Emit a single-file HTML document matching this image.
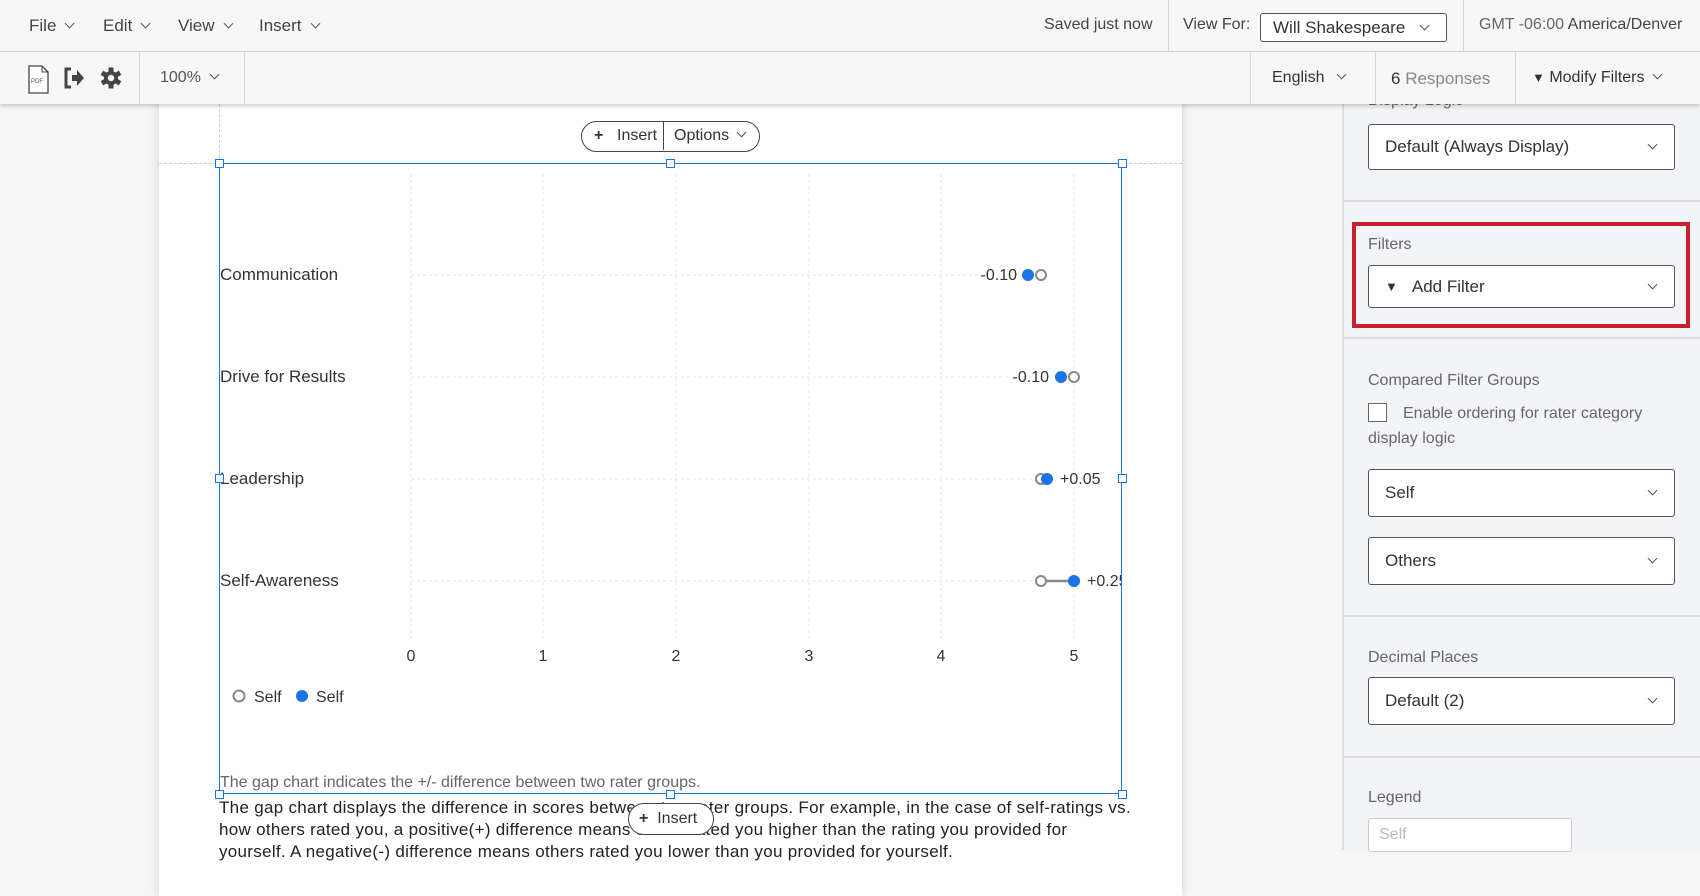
<!DOCTYPE html>
<html><head><meta charset="utf-8"><style>
*{box-sizing:border-box;margin:0;padding:0}
body{width:1700px;height:850px;overflow:hidden;background:#f6f6f6;font-family:"Liberation Sans",sans-serif;color:#333;position:relative}
.a{position:absolute;white-space:nowrap}
.bar1{position:absolute;left:0;top:0;width:1700px;height:52px;background:#f7f7f7;border-bottom:1px solid #d6d6d6}
.bar2{position:absolute;left:0;top:52px;width:1700px;height:52px;background:#f7f7f7;box-shadow:0 2px 4px rgba(0,0,0,.2);z-index:5}
.vd{position:absolute;width:1px;background:#d8d8d8}
.chev{display:inline-block;width:7px;height:7px;border-right:1.5px solid #555;border-bottom:1.5px solid #555;transform:rotate(45deg);margin-left:10px;position:relative;top:-4px}
.menu{font-size:17px;color:#444;top:16px}
.panel{position:absolute;left:1342px;top:104px;width:358px;height:746px;background:#f3f4f7;border-left:2px solid #ddd}
.dd{position:absolute;left:1368px;width:307px;background:#fff;border:1.5px solid #555;border-radius:3px;font-size:17px;color:#333;padding-left:16px;display:flex;align-items:center}
.dd .chev{position:absolute;right:18px;top:50%;margin-top:-6px}
.lbl{position:absolute;left:1368px;font-size:16px;color:#666}
.hr{position:absolute;left:1344px;width:356px;height:1.5px;background:#ddd}
.card{position:absolute;left:159px;top:96px;width:1023px;height:800px;background:#fff;box-shadow:0 0 10px rgba(0,0,0,.15)}
.h{position:absolute;width:9px;height:9px;border:1px solid #1a73e8;background:#fff}
</style></head><body>
<div class="bar1"></div>
<div class="a menu" style="left:29px">File<span class="chev"></span></div>
<div class="a menu" style="left:103px">Edit<span class="chev"></span></div>
<div class="a menu" style="left:178px">View<span class="chev"></span></div>
<div class="a menu" style="left:259px">Insert<span class="chev"></span></div>
<div class="a menu" style="left:1044px;font-size:16px">Saved just now</div>
<div class="vd" style="left:1168px;top:0;height:52px"></div>
<div class="a menu" style="left:1183px;font-size:16px">View For:</div>
<div class="a" style="left:1260px;top:13px;width:187px;height:29px;border:1.5px solid #555;border-radius:3px;background:#fff;font-size:17px;padding:4px 0 0 12px;color:#333">Will Shakespeare<span class="chev" style="margin-left:16px"></span></div>
<div class="vd" style="left:1463px;top:0;height:52px"></div>
<div class="a menu" style="left:1479px;font-size:16px;color:#666">GMT -06:00 <span style="color:#444">America/Denver</span></div>

<div class="bar2">
<svg class="a" style="left:28px;top:13px" width="21" height="29" viewBox="0 0 21 29"><path d="M1 1h13l6 6v21H1z" fill="#fff" stroke="#444" stroke-width="1.3"/><path d="M14 1v6h6" fill="none" stroke="#444"/><text x="3" y="18" font-size="6" fill="#555" font-family="Liberation Sans">PDF</text></svg>
<svg class="a" style="left:63px;top:15px" width="22" height="22" viewBox="0 0 22 22"><path d="M8 2H3v18h5" fill="none" stroke="#444" stroke-width="3"/><path d="M9 8h5V3l7 8-7 8v-5H9z" fill="#444"/></svg>
<svg class="a" style="left:100px;top:15px" width="22" height="22" viewBox="-11 -11 22 22"><g fill="#444"><circle r="7"/><rect x="-2.5" y="-10.5" width="5" height="21"/><rect x="-2.5" y="-10.5" width="5" height="21" transform="rotate(60)"/><rect x="-2.5" y="-10.5" width="5" height="21" transform="rotate(120)"/></g><circle r="3.2" fill="#f7f7f7"/></svg>
<div class="vd" style="left:139px;top:0;height:52px"></div>
<div class="a" style="left:160px;top:17px;font-size:16px;color:#555">100%<span class="chev"></span></div>
<div class="vd" style="left:244px;top:0;height:52px"></div>
<div class="vd" style="left:1250px;top:0;height:52px"></div>
<div class="a" style="left:1272px;top:17px;font-size:16px;color:#333">English<span class="chev" style="margin-left:14px"></span></div>
<div class="vd" style="left:1375px;top:0;height:52px"></div>
<div class="a" style="left:1391px;top:17px;font-size:17px;color:#888"><span style="color:#333">6</span> Responses</div>
<div class="vd" style="left:1515px;top:0;height:52px"></div>
<div class="a" style="left:1532px;top:17px;font-size:16px;color:#333"><span style="font-size:13px">&#9660;</span> Modify Filters<span class="chev"></span></div>
</div>

<div class="card"></div>
<div class="a" style="left:219px;top:104px;height:59px;border-left:1px dashed #ccc"></div>
<div class="a" style="left:159px;top:163px;width:1023px;border-top:1px dashed #ccc"></div>
<div class="a" style="left:581px;top:121px;width:179px;height:31px;border:1.5px solid #444;border-radius:16px;background:#fff;font-size:16px;padding-top:5px;color:#333">
<span style="position:absolute;left:12px;font-weight:bold">+</span><span style="position:absolute;left:35px">Insert</span><span style="position:absolute;left:81px;top:0;height:28px;border-left:1.5px solid #444"></span><span style="position:absolute;left:92px">Options<span class="chev" style="margin-left:9px"></span></span></div>

<div class="a" style="left:219px;top:163px;width:903px;height:631px;border:1px solid #1a73e8;overflow:hidden">
<svg width="903" height="631" style="position:absolute;left:0;top:0">
<g stroke="#e6e6e6" stroke-dasharray="3,3">
<line x1="191" y1="10" x2="191" y2="475"/><line x1="323" y1="10" x2="323" y2="475"/><line x1="456" y1="10" x2="456" y2="475"/><line x1="589" y1="10" x2="589" y2="475"/><line x1="721" y1="10" x2="721" y2="475"/><line x1="854" y1="10" x2="854" y2="475"/>
<line x1="191" y1="111" x2="760" y2="111"/><line x1="191" y1="213" x2="840" y2="213"/><line x1="191" y1="315" x2="820" y2="315"/><line x1="191" y1="417" x2="820" y2="417"/>
</g>
<g font-family="Liberation Sans" font-size="16" fill="#333">
<text x="797" y="116" text-anchor="end">-0.10</text>
<text x="829" y="218" text-anchor="end">-0.10</text>
<text x="840" y="320">+0.05</text>
<text x="867" y="422">+0.25</text>
</g>
<line x1="821" y1="417" x2="854" y2="417" stroke="#888" stroke-width="2.5"/>
<g fill="#fff" stroke="#888" stroke-width="2"><circle cx="821" cy="111" r="5"/><circle cx="854" cy="213" r="5"/><circle cx="821" cy="315" r="5"/><circle cx="821" cy="417" r="5"/></g>
<g fill="#1a73e8"><circle cx="808" cy="111" r="6"/><circle cx="841" cy="213" r="6"/><circle cx="827" cy="315" r="6"/><circle cx="854" cy="417" r="6"/></g>
<circle cx="19" cy="532" r="5.5" fill="#fff" stroke="#888" stroke-width="2"/><circle cx="82" cy="532" r="6" fill="#1a73e8"/>
<g font-family="Liberation Sans" font-size="16" fill="#333"><text x="34" y="538">Self</text><text x="96" y="538">Self</text>
<text x="191" y="497" text-anchor="middle">0</text><text x="323" y="497" text-anchor="middle">1</text><text x="456" y="497" text-anchor="middle">2</text><text x="589" y="497" text-anchor="middle">3</text><text x="721" y="497" text-anchor="middle">4</text><text x="854" y="497" text-anchor="middle">5</text></g>
</svg>
<div class="a" style="left:0;top:101px;font-size:17px">Communication</div>
<div class="a" style="left:0;top:203px;font-size:17px">Drive for Results</div>
<div class="a" style="left:0;top:305px;font-size:17px">Leadership</div>
<div class="a" style="left:0;top:407px;font-size:17px">Self-Awareness</div>
<div class="a" style="left:0;top:610px;font-size:16px;color:#666">The gap chart indicates the +/- difference between two rater groups.</div>
</div>
<div class="h" style="left:215px;top:159px"></div><div class="h" style="left:666px;top:159px"></div><div class="h" style="left:1118px;top:159px"></div>
<div class="h" style="left:215px;top:474px"></div><div class="h" style="left:1118px;top:474px"></div>
<div class="h" style="left:215px;top:790px"></div><div class="h" style="left:666px;top:790px"></div><div class="h" style="left:1118px;top:790px"></div>
<div class="a" style="left:219px;top:797px;font-size:17px;line-height:22px;letter-spacing:0.3px;white-space:normal;width:915px;color:#222">The gap chart displays the difference in scores between two rater groups. For example, in the case of self-ratings vs. how others rated you, a positive(+) difference means others rated you higher than the rating you provided for yourself. A negative(-) difference means others rated you lower than you provided for yourself.</div>
<div class="a" style="left:628px;top:803px;width:86px;height:32px;border:1.5px solid #444;border-radius:16px;background:#fff;font-size:16px;padding:6px 0 0 10px"><b>+</b>&nbsp; Insert</div>

<div class="panel"></div>
<div class="lbl" style="top:92px;z-index:1">Display Logic</div>
<div class="dd" style="top:124px;height:46px">Default (Always Display)<span class="chev"></span></div>
<div class="hr" style="top:200px"></div>
<div class="a" style="left:1352px;top:222px;width:338px;height:106px;border:4px solid #c8202f"></div>
<div class="lbl" style="top:236px">Filters</div>
<div class="dd" style="top:265px;height:43px"><span style="font-size:13px;margin-right:14px">&#9660;</span>Add Filter<span class="chev"></span></div>
<div class="hr" style="top:337px"></div>
<div class="lbl" style="top:372px">Compared Filter Groups</div>
<div class="a" style="left:1368px;top:403px;width:19px;height:19px;border:1.5px solid #666;background:#fff"></div>
<div class="lbl" style="top:401px;left:1368px;line-height:25px;width:300px;white-space:normal;text-indent:35px">Enable ordering for rater category display logic</div>
<div class="dd" style="top:469px;height:48px">Self<span class="chev"></span></div>
<div class="dd" style="top:537px;height:48px">Others<span class="chev"></span></div>
<div class="hr" style="top:615px"></div>
<div class="lbl" style="top:649px">Decimal Places</div>
<div class="dd" style="top:677px;height:48px">Default (2)<span class="chev"></span></div>
<div class="hr" style="top:756px"></div>
<div class="lbl" style="top:789px">Legend</div>
<div class="a" style="left:1368px;top:818px;width:204px;height:34px;border:1px solid #ccc;border-radius:3px;background:#fff;font-size:16px;color:#bbb;padding:7px 0 0 10px">Self</div>
</body></html>
